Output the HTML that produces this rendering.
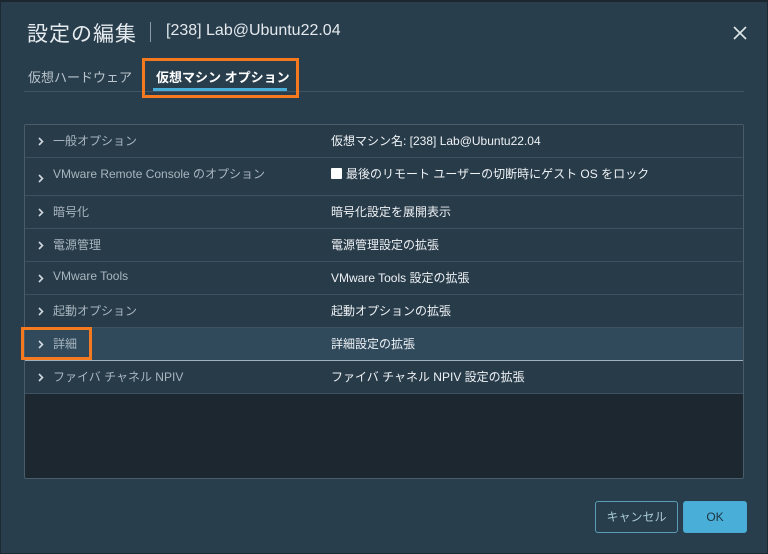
<!DOCTYPE html>
<html><head><meta charset="utf-8"><style>
*{margin:0;padding:0;box-sizing:border-box}
body{width:768px;height:554px;background:#293e4c;font-family:"Liberation Sans","Noto Sans CJK JP",sans-serif;position:relative;overflow:hidden;color:#e8eef2}
.frame{position:absolute;inset:0;border:1px solid #1e2a33;border-top:2px solid #1b262e}
.title{position:absolute;left:27px;top:18px;font-size:21px;color:#e6ebef;letter-spacing:1px}
.sep{position:absolute;left:150px;top:22px;width:1px;height:20px;background:#8a9aa6}
.sub{position:absolute;left:166px;top:22px;font-size:16px;color:#e3e9ed}
.close{position:absolute;left:733px;top:26px;width:14px;height:14px}
.tab1{position:absolute;left:28px;top:67px;font-size:13px;color:#b9c4cc}
.tab2{position:absolute;left:156px;top:67px;font-size:13px;color:#fff;font-weight:bold}
.uline{position:absolute;left:153px;top:88px;width:134px;height:3px;background:#49afd9}
.hl{position:absolute;border:3px solid #f5791f}
.tabline{position:absolute;left:24px;top:91px;width:720px;height:1px;background:#3f5563}
.table{position:absolute;left:24px;top:124px;width:720px;height:355px;background:#1c2730;border:1px solid #485c6a;border-radius:2px;overflow:hidden}
.row{position:absolute;left:0;width:718px;background:#283b49;border-bottom:1px solid #3d5260;font-size:12px}
.row .l{position:absolute;left:28px;color:#a9b6bf}
.row .r{position:absolute;left:306px;color:#eef2f5}
.row svg{position:absolute;left:13px;width:6px;height:9px}
.sel{background:#304a5c}
.btn{position:absolute;top:501px;height:32px;border-radius:3px;font-size:12px;text-align:center;line-height:30px}
.cancel{left:595px;width:83px;border:1px solid #5a9db5;color:#a8c9d6}
.ok{left:683px;width:64px;background:#49afd9;color:#1d3340;border:1px solid #4aa8d0}
.cb{display:inline-block;width:11px;height:11px;background:#fff;vertical-align:-1px;margin-right:4px;border-radius:1px}
</style></head><body>
<div class="frame"></div>
<div class="title">設定の編集</div>
<div class="sep"></div>
<div class="sub">[238] Lab@Ubuntu22.04</div>
<svg class="close" viewBox="0 0 14 14"><path d="M1 1L13 13M13 1L1 13" stroke="#dfe6ea" stroke-width="1.6"/></svg>
<div class="tab1">仮想ハードウェア</div>
<div class="tab2">仮想マシン オプション</div>
<div class="tabline"></div>
<div class="uline"></div>
<div class="hl" style="left:142px;top:58px;width:157px;height:40px"></div>
<div class="table">
<div class="row" style="top:0;height:33px"><svg style="top:12px" viewBox="0 0 6 9"><path d="M1 1L4.5 4.5L1 8" fill="none" stroke="#cfd8de" stroke-width="1.6"/></svg><span class="l" style="top:7px">一般オプション</span><span class="r" style="top:7px">仮想マシン名: [238] Lab@Ubuntu22.04</span></div>
<div class="row" style="top:33px;height:38px"><svg style="top:16px" viewBox="0 0 6 9"><path d="M1 1L4.5 4.5L1 8" fill="none" stroke="#cfd8de" stroke-width="1.6"/></svg><span class="l" style="top:7px">VMware Remote Console のオプション</span><span class="r" style="top:7px"><span class="cb"></span>最後のリモート ユーザーの切断時にゲスト OS をロック</span></div>
<div class="row" style="top:71px;height:33px"><svg style="top:12px" viewBox="0 0 6 9"><path d="M1 1L4.5 4.5L1 8" fill="none" stroke="#cfd8de" stroke-width="1.6"/></svg><span class="l" style="top:7px">暗号化</span><span class="r" style="top:7px">暗号化設定を展開表示</span></div>
<div class="row" style="top:104px;height:33px"><svg style="top:12px" viewBox="0 0 6 9"><path d="M1 1L4.5 4.5L1 8" fill="none" stroke="#cfd8de" stroke-width="1.6"/></svg><span class="l" style="top:7px">電源管理</span><span class="r" style="top:7px">電源管理設定の拡張</span></div>
<div class="row" style="top:137px;height:33px"><svg style="top:12px" viewBox="0 0 6 9"><path d="M1 1L4.5 4.5L1 8" fill="none" stroke="#cfd8de" stroke-width="1.6"/></svg><span class="l" style="top:7px">VMware Tools</span><span class="r" style="top:7px">VMware Tools 設定の拡張</span></div>
<div class="row" style="top:170px;height:33px"><svg style="top:12px" viewBox="0 0 6 9"><path d="M1 1L4.5 4.5L1 8" fill="none" stroke="#cfd8de" stroke-width="1.6"/></svg><span class="l" style="top:7px">起動オプション</span><span class="r" style="top:7px">起動オプションの拡張</span></div>
<div class="row sel" style="top:203px;height:33px;border-bottom:1px solid #9fb0bb"><svg style="top:12px" viewBox="0 0 6 9"><path d="M1 1L4.5 4.5L1 8" fill="none" stroke="#cfd8de" stroke-width="1.6"/></svg><span class="l" style="top:7px">詳細</span><span class="r" style="top:7px">詳細設定の拡張</span></div>
<div class="row" style="top:236px;height:33px"><svg style="top:12px" viewBox="0 0 6 9"><path d="M1 1L4.5 4.5L1 8" fill="none" stroke="#cfd8de" stroke-width="1.6"/></svg><span class="l" style="top:7px">ファイバ チャネル NPIV</span><span class="r" style="top:7px">ファイバ チャネル NPIV 設定の拡張</span></div>
</div>
<div class="hl" style="left:21px;top:327px;width:71px;height:33px"></div>
<div class="btn cancel">キャンセル</div>
<div class="btn ok">OK</div>
</body></html>
